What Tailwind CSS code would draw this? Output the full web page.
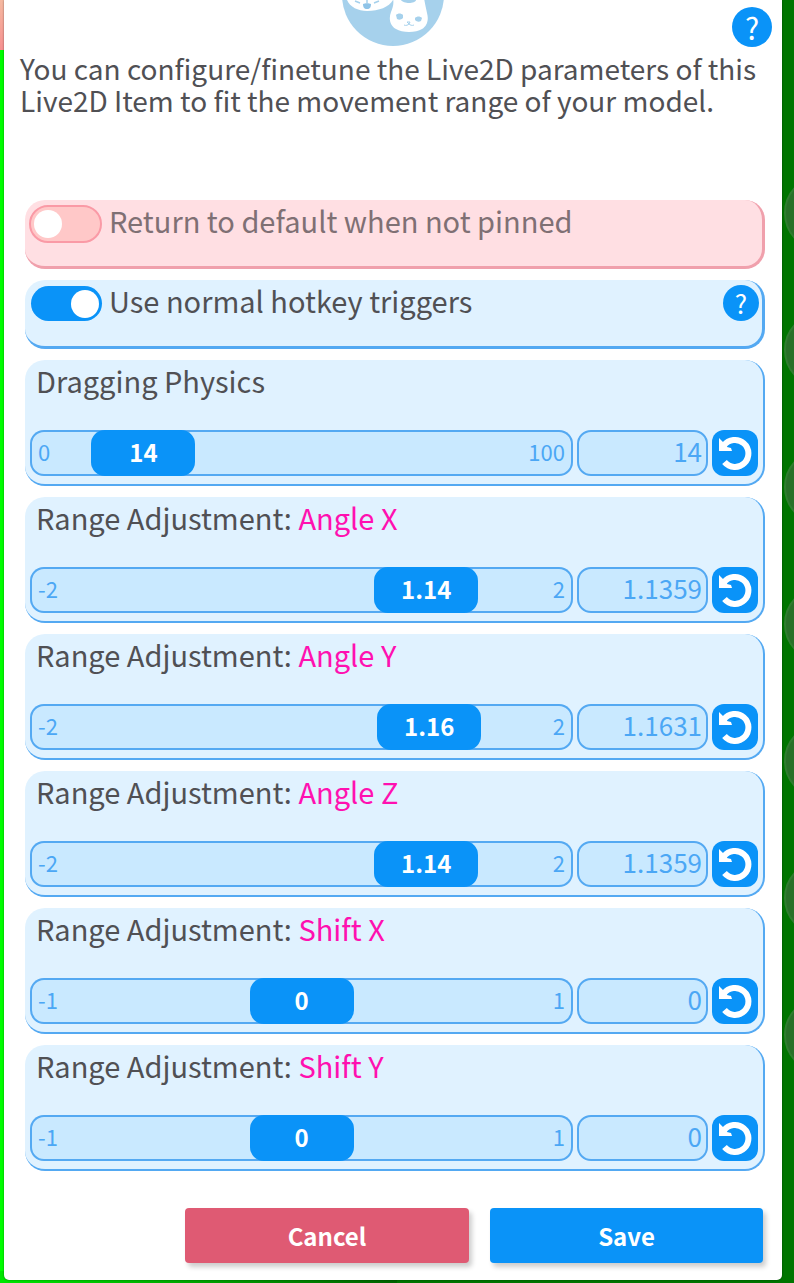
<!DOCTYPE html>
<html lang="en">
<head>
    <meta charset="UTF-8">
    <meta name="viewport" content="width=device-width, initial-scale=1.0">
    <title>Live2D Item Configuration</title>

    <!-- Tailwind CSS via CDN -->
    <script src="https://cdn.jsdelivr.net/npm/@tailwindcss/browser@4"></script>
</head>
<body class="relative min-h-screen overflow-x-hidden bg-[#007500] pl-1 pr-3 pb-[3px] font-['Noto_Sans_CJK_JP','Noto_Sans',sans-serif] text-[#505054]">
    <!-- Backdrop decoration -->
    <div class="absolute inset-y-0 left-0 w-3 bg-[#00fe00]" aria-hidden="true"></div>
    <div class="absolute bottom-0 left-0 h-3 w-1/2 bg-linear-to-r from-[#00e800] to-[#006400]" aria-hidden="true"></div>
    <div class="absolute left-0 top-0 h-[50px] w-3 bg-linear-to-b from-[#f5b9a0] to-[#f69090]" aria-hidden="true"></div>
    <div class="absolute inset-y-0 right-0 flex w-[10px] flex-col gap-[61px] overflow-hidden pt-[175px]" aria-hidden="true">
        <div class="size-[76px] shrink-0 rounded-full border-2 border-[#2f7d2f] bg-[#287028]"></div>
        <div class="size-[76px] shrink-0 rounded-full border-2 border-[#2f7d2f] bg-[#287028]"></div>
        <div class="size-[76px] shrink-0 rounded-full border-2 border-[#2f7d2f] bg-[#287028]"></div>
        <div class="size-[76px] shrink-0 rounded-full border-2 border-[#2f7d2f] bg-[#287028]"></div>
        <div class="size-[76px] shrink-0 rounded-full border-2 border-[#2f7d2f] bg-[#287028]"></div>
        <div class="size-[76px] shrink-0 rounded-full border-2 border-[#2f7d2f] bg-[#287028]"></div>
        <div class="size-[76px] shrink-0 rounded-full border-2 border-[#2f7d2f] bg-[#287028]"></div>
    </div>

    <!-- Dialog -->
    <main class="relative rounded-b-[5px] bg-white pb-[17px] shadow-[0_0_2px_rgba(0,0,0,0.5)]">
        <!-- Header -->
        <header class="grid h-[52px] grid-cols-3">
            <svg class="col-start-2 h-[50px] w-[104px] justify-self-center" viewBox="0 0 104 50" fill="none" aria-hidden="true">
                <circle cx="52" cy="-5" r="51" fill="#a6d1ec"/>
                <path d="M6 0c3 7 11 11 20 11 12 0 22-4 26-11z" fill="#fff"/>
                <path d="M22 4c2-1 6-1 8 0 0 3-1 5-4 5s-4-2-4-5z" fill="#8fc4e8"/>
                <path d="M14 1l5 2M33 3l5-2M26 0v4" stroke="#a6d1ec" stroke-width="1.5"/>
                <path d="M52 -2c1 6 0 9-2 14-3 8 0 14 5 17 6 4 20 4 26 0 5-3 7-9 5-16-1-5-2-9-3-15z" fill="#fff"/>
                <path d="M60 0h15c0 2-4 3-7 3s-7-1-8-3z" fill="#a6d1ec"/>
                <path d="M55 15c2-2 5-2 7 0v3c-2 2-4 2-6 1zM74 18c2-2 5-2 7 0l-1 3c-2 1-4 1-6-1z" fill="#a6d1ec"/>
                <path d="M66 22h3l-1 2zM63 25c2 1 4 0 5-1 1 1 3 2 5 1" stroke="#a6d1ec"/>
            </svg>
            <button type="button" aria-label="Help" class="mr-[10px] mt-[7px] size-[40px] justify-self-end rounded-full bg-[#0a93f8] text-center text-[30px]/[36px] text-white">?</button>
        </header>

        <p class="px-4 text-[28px]/[32px]">You can configure/finetune the Live2D parameters of this Live2D Item to fit the movement range of your model.</p>

        <form class="mt-[84px] flex flex-col gap-[11px] pl-[21px] pr-[17px]">
            <!-- Toggles -->
            <div class="flex h-[69px] items-start gap-[7px] rounded-[20px] border-b-3 border-r-3 border-[#f0a0ac] bg-[#ffdfe3] pl-1">
                <input type="checkbox" id="returnDefault" class="mt-[5px] flex h-[38px] w-[73px] shrink-0 appearance-none items-center rounded-full border-2 border-[#fa9aa6] bg-[#ffc8c8] px-[3px] before:size-[28px] before:rounded-full before:bg-white before:content-['']">
                <label for="returnDefault" class="text-[29px]/[40px] text-[#7f7074]">Return to default when not pinned</label>
            </div>
            <div class="flex h-[69px] items-start gap-[7px] rounded-[20px] border-b-3 border-r-3 border-[#54a9f2] bg-[#e0f2ff] pl-[6px]">
                <input type="checkbox" id="hotkeyTriggers" checked class="mt-[6px] flex h-[35px] w-[71px] shrink-0 appearance-none items-center justify-end rounded-full bg-[#0a93f8] px-[3px] before:size-[28px] before:rounded-full before:bg-white before:content-['']">
                <label for="hotkeyTriggers" class="text-[29px]/[40px]">Use normal hotkey triggers</label>
                <button type="button" aria-label="Hotkey help" class="ml-auto mr-[3px] mt-[5px] size-[36px] rounded-full bg-[#0a93f8] text-center text-[26px]/[32px] text-white">?</button>
            </div>

            <!-- Dragging Physics -->
            <section class="rounded-[20px] border-b-2 border-r-2 border-[#54a9f2] bg-[#e0f2ff] px-[5px] pb-2">
                <label for="physics" class="block px-[6px] text-[29px]/[40px]">Dragging Physics</label>
                <div class="mt-[30px] flex gap-1 text-[#4ba7f5]">
                    <div class="relative h-[46px] flex-1 text-[22px]/[42px]">
                        <input type="range" id="physics" min="0" max="100" value="14" class="block h-full w-full appearance-none rounded-[14px] bg-[#c9e9ff] inset-ring-2 inset-ring-[#54a9f2] [&::-webkit-slider-thumb]:h-[46px] [&::-webkit-slider-thumb]:w-[104px] [&::-webkit-slider-thumb]:appearance-none [&::-webkit-slider-thumb]:rounded-[14px] [&::-webkit-slider-thumb]:bg-[#0a93f8]">
                        <span class="pointer-events-none absolute left-2 top-0">0</span>
                        <span class="pointer-events-none absolute right-2 top-0">100</span>
                        <output for="physics" class="pointer-events-none absolute top-0 w-[104px] text-center text-[24px]/[44px] font-bold text-white" style="left: calc((100% - 104px) * 0.14)">14</output>
                    </div>
                    <input type="text" inputmode="decimal" aria-label="Dragging Physics value" value="14" class="h-[46px] w-[131px] rounded-[14px] border-2 border-[#54a9f2] bg-[#c9e9ff] pb-[6px] pr-1 text-right text-[26px]">
                    <button type="button" aria-label="Reset Dragging Physics" class="size-[46px] rounded-[12px] bg-[#0a93f8]">
                        <svg class="size-[46px]" viewBox="0 0 46 46" fill="none"><path d="M12 15.500A13.500 13.500 0 1 1 12.500 32" stroke="#fff" stroke-width="6"/><path d="M7 8v13h13l-1-3-4-1-1-2z" fill="#fff"/></svg>
                    </button>
                </div>
            </section>

            <!-- Angle X -->
            <section class="rounded-[20px] border-b-2 border-r-2 border-[#54a9f2] bg-[#e0f2ff] px-[5px] pb-2">
                <label for="angleX" class="block px-[6px] text-[29px]/[40px]">Range Adjustment: <span class="text-[#ff10b0]">Angle X</span></label>
                <div class="mt-[30px] flex gap-1 text-[#4ba7f5]">
                    <div class="relative h-[46px] flex-1 text-[22px]/[42px]">
                        <input type="range" id="angleX" min="-2" max="2" step="0.0001" value="1.1359" class="block h-full w-full appearance-none rounded-[14px] bg-[#c9e9ff] inset-ring-2 inset-ring-[#54a9f2] [&::-webkit-slider-thumb]:h-[46px] [&::-webkit-slider-thumb]:w-[104px] [&::-webkit-slider-thumb]:appearance-none [&::-webkit-slider-thumb]:rounded-[14px] [&::-webkit-slider-thumb]:bg-[#0a93f8]">
                        <span class="pointer-events-none absolute left-2 top-0">-2</span>
                        <span class="pointer-events-none absolute right-2 top-0">2</span>
                        <output for="angleX" class="pointer-events-none absolute top-0 w-[104px] text-center text-[24px]/[44px] font-bold text-white" style="left: calc((100% - 104px) * 0.784)">1.14</output>
                    </div>
                    <input type="text" inputmode="decimal" aria-label="Angle X value" value="1.1359" class="h-[46px] w-[131px] rounded-[14px] border-2 border-[#54a9f2] bg-[#c9e9ff] pb-[6px] pr-1 text-right text-[26px]">
                    <button type="button" aria-label="Reset Angle X" class="size-[46px] rounded-[12px] bg-[#0a93f8]">
                        <svg class="size-[46px]" viewBox="0 0 46 46" fill="none"><path d="M12 15.500A13.500 13.500 0 1 1 12.500 32" stroke="#fff" stroke-width="6"/><path d="M7 8v13h13l-1-3-4-1-1-2z" fill="#fff"/></svg>
                    </button>
                </div>
            </section>

            <!-- Angle Y -->
            <section class="rounded-[20px] border-b-2 border-r-2 border-[#54a9f2] bg-[#e0f2ff] px-[5px] pb-2">
                <label for="angleY" class="block px-[6px] text-[29px]/[40px]">Range Adjustment: <span class="text-[#ff10b0]">Angle Y</span></label>
                <div class="mt-[30px] flex gap-1 text-[#4ba7f5]">
                    <div class="relative h-[46px] flex-1 text-[22px]/[42px]">
                        <input type="range" id="angleY" min="-2" max="2" step="0.0001" value="1.1631" class="block h-full w-full appearance-none rounded-[14px] bg-[#c9e9ff] inset-ring-2 inset-ring-[#54a9f2] [&::-webkit-slider-thumb]:h-[46px] [&::-webkit-slider-thumb]:w-[104px] [&::-webkit-slider-thumb]:appearance-none [&::-webkit-slider-thumb]:rounded-[14px] [&::-webkit-slider-thumb]:bg-[#0a93f8]">
                        <span class="pointer-events-none absolute left-2 top-0">-2</span>
                        <span class="pointer-events-none absolute right-2 top-0">2</span>
                        <output for="angleY" class="pointer-events-none absolute top-0 w-[104px] text-center text-[24px]/[44px] font-bold text-white" style="left: calc((100% - 104px) * 0.791)">1.16</output>
                    </div>
                    <input type="text" inputmode="decimal" aria-label="Angle Y value" value="1.1631" class="h-[46px] w-[131px] rounded-[14px] border-2 border-[#54a9f2] bg-[#c9e9ff] pb-[6px] pr-1 text-right text-[26px]">
                    <button type="button" aria-label="Reset Angle Y" class="size-[46px] rounded-[12px] bg-[#0a93f8]">
                        <svg class="size-[46px]" viewBox="0 0 46 46" fill="none"><path d="M12 15.500A13.500 13.500 0 1 1 12.500 32" stroke="#fff" stroke-width="6"/><path d="M7 8v13h13l-1-3-4-1-1-2z" fill="#fff"/></svg>
                    </button>
                </div>
            </section>

            <!-- Angle Z -->
            <section class="rounded-[20px] border-b-2 border-r-2 border-[#54a9f2] bg-[#e0f2ff] px-[5px] pb-2">
                <label for="angleZ" class="block px-[6px] text-[29px]/[40px]">Range Adjustment: <span class="text-[#ff10b0]">Angle Z</span></label>
                <div class="mt-[30px] flex gap-1 text-[#4ba7f5]">
                    <div class="relative h-[46px] flex-1 text-[22px]/[42px]">
                        <input type="range" id="angleZ" min="-2" max="2" step="0.0001" value="1.1359" class="block h-full w-full appearance-none rounded-[14px] bg-[#c9e9ff] inset-ring-2 inset-ring-[#54a9f2] [&::-webkit-slider-thumb]:h-[46px] [&::-webkit-slider-thumb]:w-[104px] [&::-webkit-slider-thumb]:appearance-none [&::-webkit-slider-thumb]:rounded-[14px] [&::-webkit-slider-thumb]:bg-[#0a93f8]">
                        <span class="pointer-events-none absolute left-2 top-0">-2</span>
                        <span class="pointer-events-none absolute right-2 top-0">2</span>
                        <output for="angleZ" class="pointer-events-none absolute top-0 w-[104px] text-center text-[24px]/[44px] font-bold text-white" style="left: calc((100% - 104px) * 0.784)">1.14</output>
                    </div>
                    <input type="text" inputmode="decimal" aria-label="Angle Z value" value="1.1359" class="h-[46px] w-[131px] rounded-[14px] border-2 border-[#54a9f2] bg-[#c9e9ff] pb-[6px] pr-1 text-right text-[26px]">
                    <button type="button" aria-label="Reset Angle Z" class="size-[46px] rounded-[12px] bg-[#0a93f8]">
                        <svg class="size-[46px]" viewBox="0 0 46 46" fill="none"><path d="M12 15.500A13.500 13.500 0 1 1 12.500 32" stroke="#fff" stroke-width="6"/><path d="M7 8v13h13l-1-3-4-1-1-2z" fill="#fff"/></svg>
                    </button>
                </div>
            </section>

            <!-- Shift X -->
            <section class="rounded-[20px] border-b-2 border-r-2 border-[#54a9f2] bg-[#e0f2ff] px-[5px] pb-2">
                <label for="shiftX" class="block px-[6px] text-[29px]/[40px]">Range Adjustment: <span class="text-[#ff10b0]">Shift X</span></label>
                <div class="mt-[30px] flex gap-1 text-[#4ba7f5]">
                    <div class="relative h-[46px] flex-1 text-[22px]/[42px]">
                        <input type="range" id="shiftX" min="-1" max="1" step="0.0001" value="0" class="block h-full w-full appearance-none rounded-[14px] bg-[#c9e9ff] inset-ring-2 inset-ring-[#54a9f2] [&::-webkit-slider-thumb]:h-[46px] [&::-webkit-slider-thumb]:w-[104px] [&::-webkit-slider-thumb]:appearance-none [&::-webkit-slider-thumb]:rounded-[14px] [&::-webkit-slider-thumb]:bg-[#0a93f8]">
                        <span class="pointer-events-none absolute left-2 top-0">-1</span>
                        <span class="pointer-events-none absolute right-2 top-0">1</span>
                        <output for="shiftX" class="pointer-events-none absolute top-0 w-[104px] text-center text-[24px]/[44px] font-bold text-white" style="left: calc((100% - 104px) * 0.5)">0</output>
                    </div>
                    <input type="text" inputmode="decimal" aria-label="Shift X value" value="0" class="h-[46px] w-[131px] rounded-[14px] border-2 border-[#54a9f2] bg-[#c9e9ff] pb-[6px] pr-1 text-right text-[26px]">
                    <button type="button" aria-label="Reset Shift X" class="size-[46px] rounded-[12px] bg-[#0a93f8]">
                        <svg class="size-[46px]" viewBox="0 0 46 46" fill="none"><path d="M12 15.500A13.500 13.500 0 1 1 12.500 32" stroke="#fff" stroke-width="6"/><path d="M7 8v13h13l-1-3-4-1-1-2z" fill="#fff"/></svg>
                    </button>
                </div>
            </section>

            <!-- Shift Y -->
            <section class="rounded-[20px] border-b-2 border-r-2 border-[#54a9f2] bg-[#e0f2ff] px-[5px] pb-2">
                <label for="shiftY" class="block px-[6px] text-[29px]/[40px]">Range Adjustment: <span class="text-[#ff10b0]">Shift Y</span></label>
                <div class="mt-[30px] flex gap-1 text-[#4ba7f5]">
                    <div class="relative h-[46px] flex-1 text-[22px]/[42px]">
                        <input type="range" id="shiftY" min="-1" max="1" step="0.0001" value="0" class="block h-full w-full appearance-none rounded-[14px] bg-[#c9e9ff] inset-ring-2 inset-ring-[#54a9f2] [&::-webkit-slider-thumb]:h-[46px] [&::-webkit-slider-thumb]:w-[104px] [&::-webkit-slider-thumb]:appearance-none [&::-webkit-slider-thumb]:rounded-[14px] [&::-webkit-slider-thumb]:bg-[#0a93f8]">
                        <span class="pointer-events-none absolute left-2 top-0">-1</span>
                        <span class="pointer-events-none absolute right-2 top-0">1</span>
                        <output for="shiftY" class="pointer-events-none absolute top-0 w-[104px] text-center text-[24px]/[44px] font-bold text-white" style="left: calc((100% - 104px) * 0.5)">0</output>
                    </div>
                    <input type="text" inputmode="decimal" aria-label="Shift Y value" value="0" class="h-[46px] w-[131px] rounded-[14px] border-2 border-[#54a9f2] bg-[#c9e9ff] pb-[6px] pr-1 text-right text-[26px]">
                    <button type="button" aria-label="Reset Shift Y" class="size-[46px] rounded-[12px] bg-[#0a93f8]">
                        <svg class="size-[46px]" viewBox="0 0 46 46" fill="none"><path d="M12 15.500A13.500 13.500 0 1 1 12.500 32" stroke="#fff" stroke-width="6"/><path d="M7 8v13h13l-1-3-4-1-1-2z" fill="#fff"/></svg>
                    </button>
                </div>
            </section>

            <!-- Actions -->
            <div class="mt-[26px] flex justify-end gap-[21px] pr-[2px] text-[24px]/[55px] font-bold text-white">
                <button type="button" class="w-[284px] rounded-[4px] bg-[#df5a73] shadow-[3px_4px_5px_rgba(0,0,0,0.2)]">Cancel</button>
                <button type="submit" class="w-[273px] rounded-[4px] bg-[#0a93f8] shadow-[3px_4px_5px_rgba(0,0,0,0.2)]">Save</button>
            </div>
        </form>
    </main>
</body>
</html>
